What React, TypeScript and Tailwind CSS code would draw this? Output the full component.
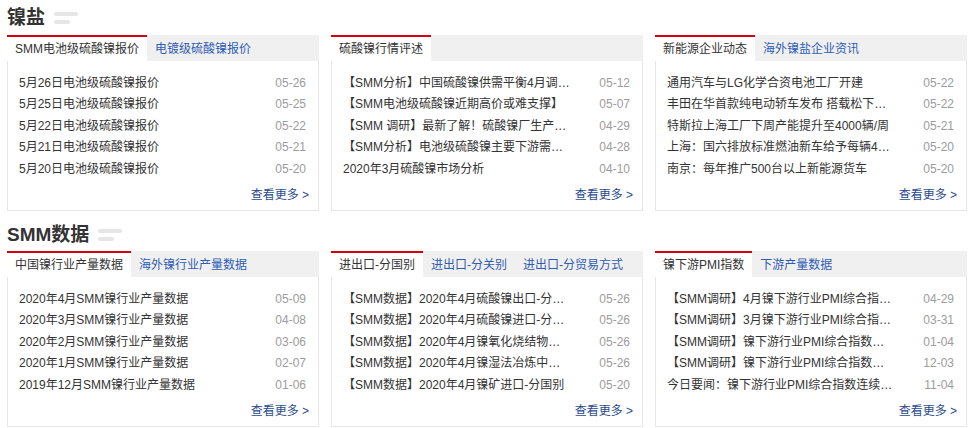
import React from "react";

type Item = [string, string];
type PanelData = { tabs: string[]; items: Item[] };

const sections: { title: string; panels: PanelData[] }[] = [
  {
    title: "镍盐",
    panels: [
      {
        tabs: ["SMM电池级硫酸镍报价", "电镀级硫酸镍报价"],
        items: [
          ["5月26日电池级硫酸镍报价", "05-26"],
          ["5月25日电池级硫酸镍报价", "05-25"],
          ["5月22日电池级硫酸镍报价", "05-22"],
          ["5月21日电池级硫酸镍报价", "05-21"],
          ["5月20日电池级硫酸镍报价", "05-20"],
        ],
      },
      {
        tabs: ["硫酸镍行情评述"],
        items: [
          ["【SMM分析】中国硫酸镍供需平衡4月调…", "05-12"],
          ["【SMM电池级硫酸镍近期高价或难支撑】", "05-07"],
          ["【SMM 调研】最新了解！硫酸镍厂生产…", "04-29"],
          ["【SMM分析】电池级硫酸镍主要下游需…", "04-28"],
          ["2020年3月硫酸镍市场分析", "04-10"],
        ],
      },
      {
        tabs: ["新能源企业动态", "海外镍盐企业资讯"],
        items: [
          ["通用汽车与LG化学合资电池工厂开建", "05-22"],
          ["丰田在华首款纯电动轿车发布 搭载松下…", "05-22"],
          ["特斯拉上海工厂下周产能提升至4000辆/周", "05-21"],
          ["上海：国六排放标准燃油新车给予每辆4…", "05-20"],
          ["南京：每年推广500台以上新能源货车", "05-20"],
        ],
      },
    ],
  },
  {
    title: "SMM数据",
    panels: [
      {
        tabs: ["中国镍行业产量数据", "海外镍行业产量数据"],
        items: [
          ["2020年4月SMM镍行业产量数据", "05-09"],
          ["2020年3月SMM镍行业产量数据", "04-08"],
          ["2020年2月SMM镍行业产量数据", "03-06"],
          ["2020年1月SMM镍行业产量数据", "02-07"],
          ["2019年12月SMM镍行业产量数据", "01-06"],
        ],
      },
      {
        tabs: ["进出口-分国别", "进出口-分关别", "进出口-分贸易方式"],
        items: [
          ["【SMM数据】2020年4月硫酸镍出口-分…", "05-26"],
          ["【SMM数据】2020年4月硫酸镍进口-分…", "05-26"],
          ["【SMM数据】2020年4月镍氧化烧结物…", "05-26"],
          ["【SMM数据】2020年4月镍湿法冶炼中…", "05-26"],
          ["【SMM数据】2020年4月镍矿进口-分国别", "05-20"],
        ],
      },
      {
        tabs: ["镍下游PMI指数", "下游产量数据"],
        items: [
          ["【SMM调研】4月镍下游行业PMI综合指…", "04-29"],
          ["【SMM调研】3月镍下游行业PMI综合指…", "03-31"],
          ["【SMM调研】镍下游行业PMI综合指数…", "01-04"],
          ["【SMM调研】镍下游行业PMI综合指数…", "12-03"],
          ["今日要闻：镍下游行业PMI综合指数连续…", "11-04"],
        ],
      },
    ],
  },
];

function Panel({ data }: { data: PanelData }) {
  return (
    <div className="flex flex-col">
      <div className="flex h-[26px] bg-[#f0f0f0]">
        {data.tabs.map((t, i) => (
          <div
            key={t}
            className={
              i === 0
                ? "px-2 border-t-2 border-[#d7000f] bg-white text-[#333] text-[12px] leading-[24px] whitespace-nowrap"
                : "px-2 border-t-2 border-transparent text-[#2f5cb5] text-[12px] leading-[24px] whitespace-nowrap"
            }
          >
            {t}
          </div>
        ))}
      </div>
      <div className="flex h-[150px] flex-col border border-t-0 border-[#e6e6e6] bg-white pl-[11px] pr-[12px] pt-[11px]">
        {data.items.map(([text, date], i) => (
          <div key={i} className="flex h-[21.5px] items-center justify-between text-[12px]">
            <span className="max-w-[230px] truncate whitespace-nowrap text-[#333]">{text}</span>
            <span className="shrink-0 text-[#9c9c9c]">{date}</span>
          </div>
        ))}
        <div className="mr-[-3px] mt-[5px] flex justify-end text-[12px] leading-[21px] text-[#2a4b8d]">
          查看更多 &gt;
        </div>
      </div>
    </div>
  );
}

export default function App() {
  return (
    <div className="h-[428px] w-[969px] overflow-hidden bg-white pl-[7px] font-['Liberation_Sans','Noto_Sans_CJK_SC',sans-serif]">
      {sections.map((s, si) => (
        <div key={s.title} className={si === 0 ? "" : "mt-[5px]"}>
          <div className={si === 0 ? "flex h-[35px] items-center gap-[9px]" : "flex h-[35px] items-center gap-[9px] pt-[2px]"}>
            <span className="text-[19px] font-bold leading-none text-[#333]">{s.title}</span>
            <div className="flex flex-col gap-[4px]">
              <div className="h-[4px] w-[24px] rounded-full bg-[#e6e6e6]" />
              <div className="h-[4px] w-[16px] rounded-full bg-[#e6e6e6]" />
            </div>
          </div>
          <div className="grid grid-cols-[312px_312px_312px] gap-x-[12px]">
            {s.panels.map((p, pi) => (
              <Panel key={pi} data={p} />
            ))}
          </div>
        </div>
      ))}
    </div>
  );
}
